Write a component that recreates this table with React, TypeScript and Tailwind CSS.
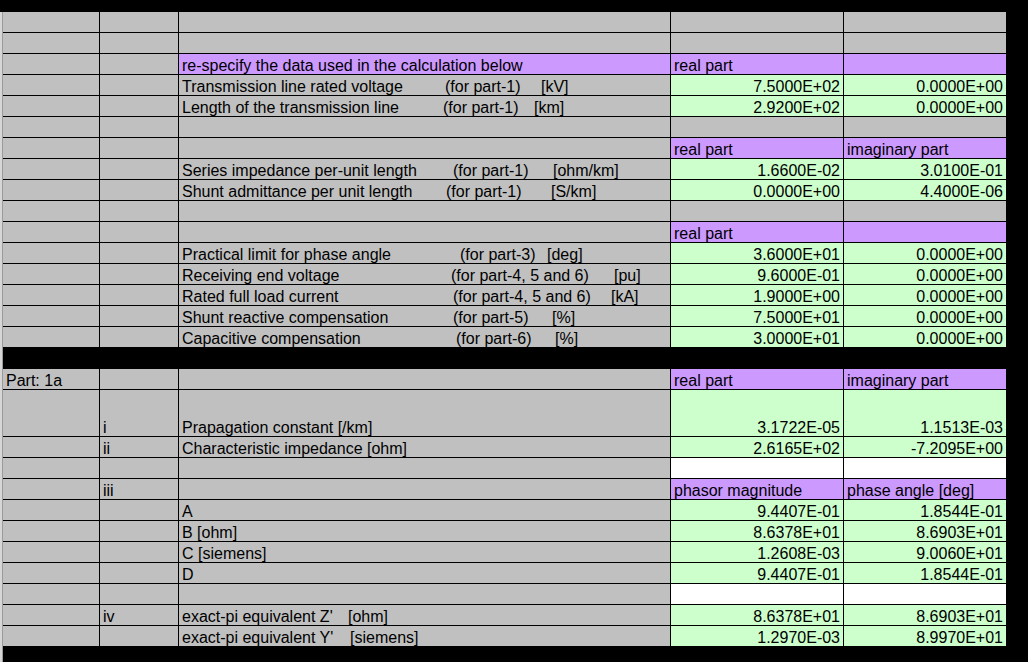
import React from "react";
import clsx from "clsx";

type Tone = "grey" | "purple" | "green" | "white";

type RowData = {
  tall?: boolean;
  c1?: React.ReactNode;
  c2?: React.ReactNode;
  c3?: React.ReactNode;
  c3Tone?: Tone;
  c4?: React.ReactNode;
  c5?: React.ReactNode;
  tone45?: Tone;
  num?: boolean;
};

const tones: Record<Tone, string> = {
  grey: "bg-[#c0c0c0]",
  purple: "bg-[#cc99ff]",
  green: "bg-[#ccffcc]",
  white: "bg-white",
};

const Cell = ({
  w,
  tone = "grey",
  right,
  last,
  children,
}: {
  w: string;
  tone?: Tone;
  right?: boolean;
  last?: boolean;
  children?: React.ReactNode;
}) => (
  <div
    className={clsx(
      "flex items-end h-full shrink-0 border-b border-black px-[3px] leading-[17px] whitespace-pre overflow-hidden",
      w,
      tones[tone],
      !last && "border-r",
      right && "justify-end"
    )}
  >
    {children}
  </div>
);

const Row = ({ r }: { r: RowData }) => (
  <div className={clsx("flex", r.tall ? "h-[47px]" : "h-[21px]")}>
    <Cell w="w-[97px]">{r.c1}</Cell>
    <Cell w="w-[79px]">{r.c2}</Cell>
    <Cell w="w-[492px]" tone={r.c3Tone}>
      {r.c3}
    </Cell>
    <Cell w="w-[173px]" tone={r.tone45} right={r.num}>
      {r.c4}
    </Cell>
    <Cell w="w-[162px]" tone={r.tone45} right={r.num} last>
      {r.c5}
    </Cell>
  </div>
);

const val = (c3: React.ReactNode, c4: string, c5: string, extra: Partial<RowData> = {}): RowData => ({
  c3,
  c4,
  c5,
  tone45: "green",
  num: true,
  ...extra,
});

const top: RowData[] = [
  {},
  {},
  { c3: "re-specify the data used in the calculation below", c3Tone: "purple", c4: "real part", tone45: "purple" },
  val(
    <span>
      <span className="inline-block w-[263px]">Transmission line rated voltage</span>
      <span className="inline-block w-[96px]">(for part-1)</span>
      <span>[kV]</span>
    </span>,
    "7.5000E+02",
    "0.0000E+00"
  ),
  val(
    <span>
      <span className="inline-block w-[261px]">Length of the transmission line</span>
      <span className="inline-block w-[91px]">(for part-1)</span>
      <span>[km]</span>
    </span>,
    "2.9200E+02",
    "0.0000E+00"
  ),
  {},
  { c4: "real part", c5: "imaginary part", tone45: "purple" },
  val(
    <span>
      <span className="inline-block w-[271px]">Series impedance per-unit length</span>
      <span className="inline-block w-[100px]">(for part-1)</span>
      <span>[ohm/km]</span>
    </span>,
    "1.6600E-02",
    "3.0100E-01"
  ),
  val(
    <span>
      <span className="inline-block w-[264px]">Shunt admittance per unit length</span>
      <span className="inline-block w-[105px]">(for part-1)</span>
      <span>[S/km]</span>
    </span>,
    "0.0000E+00",
    "4.4000E-06"
  ),
  {},
  { c4: "real part", tone45: "purple" },
  val(
    <span>
      <span className="inline-block w-[278px]">Practical limit for phase angle</span>
      <span className="inline-block w-[87px]">(for part-3)</span>
      <span>[deg]</span>
    </span>,
    "3.6000E+01",
    "0.0000E+00"
  ),
  val(
    <span>
      <span className="inline-block w-[269px]">Receiving end voltage</span>
      <span className="inline-block w-[163px]">(for part-4, 5 and 6)</span>
      <span>[pu]</span>
    </span>,
    "9.6000E-01",
    "0.0000E+00"
  ),
  val(
    <span>
      <span className="inline-block w-[271px]">Rated full load current</span>
      <span className="inline-block w-[158px]">(for part-4, 5 and 6)</span>
      <span>[kA]</span>
    </span>,
    "1.9000E+00",
    "0.0000E+00"
  ),
  val(
    <span>
      <span className="inline-block w-[271px]">Shunt reactive compensation</span>
      <span className="inline-block w-[99px]">(for part-5)</span>
      <span>[%]</span>
    </span>,
    "7.5000E+01",
    "0.0000E+00"
  ),
  val(
    <span>
      <span className="inline-block w-[274px]">Capacitive compensation</span>
      <span className="inline-block w-[99px]">(for part-6)</span>
      <span>[%]</span>
    </span>,
    "3.0000E+01",
    "0.0000E+00"
  ),
];

const bottom: RowData[] = [
  { c1: "Part: 1a", c4: "real part", c5: "imaginary part", tone45: "purple" },
  val("Prapagation constant [/km]", "3.1722E-05", "1.1513E-03", { tall: true, c2: "i" }),
  val("Characteristic impedance [ohm]", "2.6165E+02", "-7.2095E+00", { c2: "ii" }),
  { tone45: "white" },
  { c2: "iii", c4: "phasor magnitude", c5: "phase angle [deg]", tone45: "purple" },
  val("A", "9.4407E-01", "1.8544E-01"),
  val("B [ohm]", "8.6378E+01", "8.6903E+01"),
  val("C [siemens]", "1.2608E-03", "9.0060E+01"),
  val("D", "9.4407E-01", "1.8544E-01"),
  { tone45: "white" },
  val(
    <span>
      <span className="inline-block w-[166px]">exact-pi equivalent Z'</span>
      <span>[ohm]</span>
    </span>,
    "8.6378E+01",
    "8.6903E+01",
    { c2: "iv" }
  ),
  val(
    <span>
      <span className="inline-block w-[168px]">exact-pi equivalent Y'</span>
      <span>[siemens]</span>
    </span>,
    "1.2970E-03",
    "8.9970E+01"
  ),
];

export default function App() {
  return (
    <div className="w-[1028px] h-[662px] bg-black flex flex-col overflow-hidden font-['Liberation_Sans',Arial,sans-serif] text-[16px] text-black">
      <div className="h-[12px] shrink-0" />
      <div className="flex flex-1">
        <div className="w-[3px] shrink-0 bg-[#d6d6d6] border-r border-[#9a9a9a]" />
        <div className="flex flex-col w-[1003px] shrink-0">
          {top.map((r, i) => (
            <Row key={"t" + i} r={r} />
          ))}
          <div className="h-[21px] shrink-0 bg-black" />
          {bottom.map((r, i) => (
            <Row key={"b" + i} r={r} />
          ))}
        </div>
        <div className="flex-1 bg-black" />
      </div>
    </div>
  );
}
